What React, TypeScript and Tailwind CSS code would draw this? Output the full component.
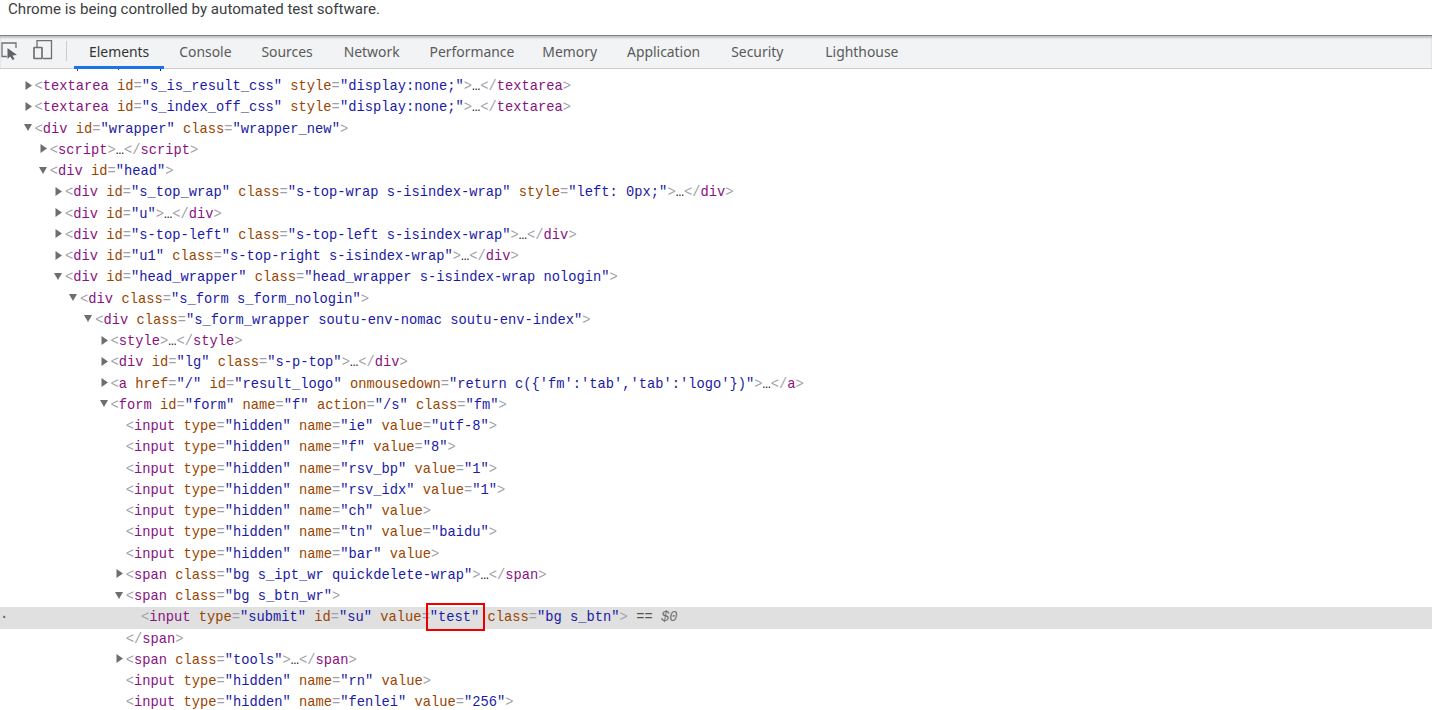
type Tok = [string, string];
const T = "text-[#881280]", A = "text-[#994500]", V = "text-[#1a1aa6]", X = "text-[#222222]";

function parse(s: string) {
  const out: Tok[] = [];
  const re = /(<\/?[a-z]+|>|…)|( [a-z_-]+(?==| |>))|(=)|("[^"]*")|(\s)/g;
  let m: RegExpExecArray | null;
  while ((m = re.exec(s))) {
    if (m[1]) {
      if (m[1] === "…") out.push(["…", X]);
      else if (m[1] === ">") out.push([">", "text-[#a0a0a8]"]);
      else {
        const pre = m[1].startsWith("</") ? "</" : "<";
        out.push([pre, "text-[#a0a0a8]"]);
        out.push([m[1].slice(pre.length), T]);
      }
    } else if (m[2]) out.push([m[2], A]);
    else if (m[3]) out.push(["=", "text-[#a0a0a8]"]);
    else if (m[4]) out.push([m[4], V]);
    else out.push([m[0], X]);
  }
  return out;
}

const rows: [number, "r" | "d" | "", string][] = [
  [0, "r", '<textarea id="s_is_result_css" style="display:none;">…</textarea>'],
  [0, "r", '<textarea id="s_index_off_css" style="display:none;">…</textarea>'],
  [0, "d", '<div id="wrapper" class="wrapper_new">'],
  [1, "r", "<script>…</script>"],
  [1, "d", '<div id="head">'],
  [2, "r", '<div id="s_top_wrap" class="s-top-wrap s-isindex-wrap" style="left: 0px;">…</div>'],
  [2, "r", '<div id="u">…</div>'],
  [2, "r", '<div id="s-top-left" class="s-top-left s-isindex-wrap">…</div>'],
  [2, "r", '<div id="u1" class="s-top-right s-isindex-wrap">…</div>'],
  [2, "d", '<div id="head_wrapper" class="head_wrapper s-isindex-wrap nologin">'],
  [3, "d", '<div class="s_form s_form_nologin">'],
  [4, "d", '<div class="s_form_wrapper soutu-env-nomac soutu-env-index">'],
  [5, "r", "<style>…</style>"],
  [5, "r", '<div id="lg" class="s-p-top">…</div>'],
  [5, "r", `<a href="/" id="result_logo" onmousedown="return c({'fm':'tab','tab':'logo'})">…</a>`],
  [5, "d", '<form id="form" name="f" action="/s" class="fm">'],
  [6, "", '<input type="hidden" name="ie" value="utf-8">'],
  [6, "", '<input type="hidden" name="f" value="8">'],
  [6, "", '<input type="hidden" name="rsv_bp" value="1">'],
  [6, "", '<input type="hidden" name="rsv_idx" value="1">'],
  [6, "", '<input type="hidden" name="ch" value>'],
  [6, "", '<input type="hidden" name="tn" value="baidu">'],
  [6, "", '<input type="hidden" name="bar" value>'],
  [6, "r", '<span class="bg s_ipt_wr quickdelete-wrap">…</span>'],
  [6, "d", '<span class="bg s_btn_wr">'],
  [7, "", '<input type="submit" id="su" value="test" class="bg s_btn">'],
  [6, "", "</span>"],
  [6, "r", '<span class="tools">…</span>'],
  [6, "", '<input type="hidden" name="rn" value>'],
  [6, "", '<input type="hidden" name="fenlei" value="256">'],
];

function Arrow({ kind }: { kind: "r" | "d" | "" }) {
  if (!kind) return <span className="w-[11px] shrink-0" />;
  return (
    <svg width="11" height="11" viewBox="0 0 11 11" className="shrink-0 -mt-[3px]">
      {kind === "r" ? <path d="M1.5 1 L8 5.5 L1.5 10 Z" fill="#6e6e6e" /> : <path d="M0 2 L8 2 L4 9 Z" fill="#6e6e6e" />}
    </svg>
  );
}

const tabs: [string, string][] = [
  ["Elements", "text-[#333333] px-[15px] border-b-[3px] border-[#1a73e8]"],
  ["Console", "px-[15px] pb-[3px]"],
  ["Sources", "pl-[15px] pr-[16px] pb-[3px]"],
  ["Network", "px-[15px] pb-[3px]"],
  ["Performance", "pl-[15px] pr-[13px] pb-[3px]"],
  ["Memory", "px-[15px] pb-[3px]"],
  ["Application", "px-[15px] pb-[3px]"],
  ["Security", "pl-[16px] pr-[27px] pb-[3px]"],
  ["Lighthouse", "px-[15px] pb-[3px]"],
];

export default function App() {
  return (
    <div className="relative w-[1432px] h-[710px] overflow-hidden bg-white font-['Noto_Sans',sans-serif]">
      <div className="h-[35px] pl-2 font-['Roboto',sans-serif] text-[15.1px] leading-[18px] text-[#3c4043]">Chrome is being controlled by automated test software.</div>
      <div className="h-[34px] flex items-stretch bg-[#f1f3f4] border-b border-[#cccccc] border-t border-t-[#808080] shadow-[inset_0_2px_2px_rgba(0,0,0,0.2)]">
        <div className="relative w-[66px] flex items-center shrink-0 pb-[3px]">
          <svg width="22" height="22" viewBox="0 0 22 22" className="shrink-0" fill="none" stroke="#707070" strokeWidth="1.3">
            <path d="M7 16.5 H2 V3 H16 V8" />
            <path d="M7.5 8 L7.5 19 L10.2 16.4 L12.6 20 L14.6 19 L12.4 15.4 L17 15 Z" fill="#5f6368" stroke="none" />
          </svg>
          <svg width="22" height="22" viewBox="0 0 22 22" className="ml-[9px] shrink-0" fill="none" stroke="#707070" strokeWidth="1.3">
            <path d="M6 7 V0.7 H20.5 V18.5 H12" />
            <rect x="3" y="7.5" width="8" height="11" rx="0.5" strokeWidth="1.7" />
          </svg>
          <div className="ml-[13px] h-[20px] w-px bg-[#cccccc] shrink-0" />
        </div>
        <div className="ml-[8px] pt-[2px] flex items-stretch text-[13.9px] text-[#5a5a5a]">
          {tabs.map(([name, c]) => (
            <div key={name} className={`flex items-center -mb-px ${c}`}>{name}</div>
          ))}
        </div>
      </div>
      <div className="relative h-[641px] overflow-hidden pt-[7.1px] font-['Liberation_Mono',monospace] text-[13.75px] leading-[21.25px]">
        <div className="absolute left-[77px] top-0 w-px h-[2px] bg-[#881280]" />
        <div className="absolute left-[118px] top-0 w-px h-px bg-[#881280]" />
        <div className="absolute left-[160px] top-0 w-px h-[2px] bg-[#1a1aa6]" />
        {rows.map(([depth, kind, src], i) => {
          const sel = i === 25;
          return (
            <div key={i} className={`relative flex items-center h-[21.25px] whitespace-pre ${sel ? "bg-[#e0e0e0]" : ""}`} style={{ paddingLeft: 23.5 + depth * 15.2 }}>
              {sel && <span className="absolute left-0 text-[#555555]">·</span>}
              <Arrow kind={kind} />
              {parse(src).map(([t, c], j) => (
                <span key={j} className={c}>{t}</span>
              ))}
              {sel && <span className="text-[#555555]"> == <i className="text-[#6e6e6e]">$0</i></span>}
            </div>
          );
        })}
        <div className="absolute left-[426px] top-[534px] w-[59px] h-[28px] border-2 border-[#ee0000]" />
      </div>
    </div>
  );
}
